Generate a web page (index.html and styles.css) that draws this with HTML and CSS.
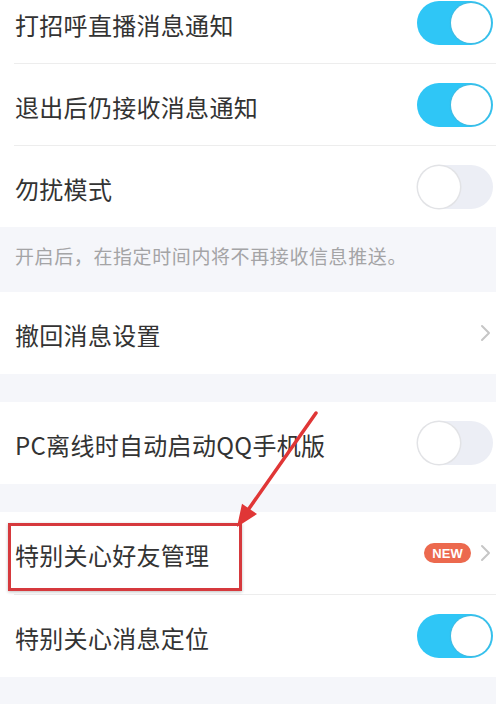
FILE: index.html
```html
<!DOCTYPE html>
<html lang="zh-CN">
<head>
<meta charset="utf-8">
<title>消息通知设置</title>
<link rel="stylesheet" href="styles.css">
</head>
<body>
<div class="page">
  <div class="group top">
    <div class="row">
      <span class="label">打招呼直播消息通知</span>
      <span class="switch on"><span class="knob"></span></span>
    </div>
    <div class="divider"></div>
    <div class="row">
      <span class="label">退出后仍接收消息通知</span>
      <span class="switch on"><span class="knob"></span></span>
    </div>
    <div class="divider"></div>
    <div class="row">
      <span class="label">勿扰模式</span>
      <span class="switch off"><span class="knob"></span></span>
    </div>
  </div>
  <div class="note">开启后，在指定时间内将不再接收信息推送。</div>
  <div class="group">
    <div class="row">
      <span class="label">撤回消息设置</span>
      <svg class="chev" width="12" height="18" viewBox="0 0 12 18"><polyline points="2,2 9,9 2,16" fill="none" stroke="#c6c6c6" stroke-width="2" stroke-linecap="round" stroke-linejoin="round"/></svg>
    </div>
  </div>
  <div class="gap"></div>
  <div class="group">
    <div class="row">
      <span class="label">PC离线时自动启动QQ手机版</span>
      <span class="switch off"><span class="knob"></span></span>
    </div>
  </div>
  <div class="gap"></div>
  <div class="group">
    <div class="row marked">
      <span class="label">特别关心好友管理</span>
      <span class="trail">
        <span class="badge">NEW</span>
        <svg class="chev" width="12" height="18" viewBox="0 0 12 18"><polyline points="2,2 9,9 2,16" fill="none" stroke="#c6c6c6" stroke-width="2" stroke-linecap="round" stroke-linejoin="round"/></svg>
      </span>
      <span class="highlight"></span>
    </div>
    <div class="divider"></div>
    <div class="row">
      <span class="label">特别关心消息定位</span>
      <span class="switch on"><span class="knob"></span></span>
    </div>
  </div>
  <svg class="arrow" width="496" height="704" viewBox="0 0 496 704">
    <line x1="316" y1="413" x2="248" y2="510" stroke="#e03636" stroke-width="3.5" stroke-linecap="round"/>
    <polygon points="237,527 242,503.8 257,514" fill="#e03636"/>
  </svg>
</div>
</body>
</html>
```

FILE: styles.css
```css
html, body {
  margin: 0;
  padding: 0;
  background: #f5f6fa;
}

.page {
  position: relative;
  width: 496px;
  height: 704px;
  overflow: hidden;
  font-family: "Noto Sans CJK SC", "Noto Sans", sans-serif;
  color: #333333;
}

.group {
  background: #ffffff;
}

.group.top {
  margin-top: -18px;
}

.row {
  position: relative;
  display: flex;
  align-items: center;
  justify-content: space-between;
  height: 82px;
  padding: 0 3px 0 15px;
  box-sizing: border-box;
}

.group.top .row {
  height: 81px;
}

.label {
  font-size: 24px;
  line-height: 1;
  padding-top: 4px;
  letter-spacing: 0.3px;
}

.divider {
  height: 1px;
  margin-left: 14px;
  background: #ededed;
}

.note {
  height: 65px;
  box-sizing: border-box;
  padding: 17px 0 0 15px;
  font-size: 19px;
  line-height: 24px;
  letter-spacing: 0.6px;
  color: #a4a4a6;
}

.gap {
  height: 28px;
}

.switch {
  position: relative;
  display: flex;
  align-items: center;
  width: 76px;
  height: 44px;
  border-radius: 22px;
  box-sizing: border-box;
  padding: 2px;
}

.switch.on {
  background: #2fc6f6;
  justify-content: flex-end;
}

.switch.off {
  background: #eceef5;
  justify-content: flex-start;
  padding: 1px;
}

.knob {
  display: block;
  width: 40px;
  height: 40px;
  border-radius: 50%;
  background: #ffffff;
  box-shadow: 0 0 1px 1px rgba(120, 150, 160, 0.25);
}

.switch.off .knob {
  width: 42px;
  height: 42px;
  box-shadow: 0 0 0 1.5px #e2e3e6;
}

.chev {
  display: block;
  margin-right: 1px;
}

.trail {
  display: flex;
  align-items: center;
}

.badge {
  display: flex;
  align-items: center;
  justify-content: center;
  width: 47px;
  height: 20px;
  border-radius: 10px;
  background: #ec694e;
  color: #ffffff;
  font-family: "Liberation Sans", Arial, sans-serif;
  font-size: 13px;
  font-weight: bold;
  margin-right: 9px;
}

.highlight {
  position: absolute;
  left: 8px;
  top: 11px;
  width: 234px;
  height: 68px;
  border: 3px solid #d6393d;
  box-sizing: border-box;
  box-shadow: 0 1px 3px rgba(0, 0, 0, 0.25);
}

.arrow {
  position: absolute;
  left: 0;
  top: 0;
  pointer-events: none;
}
```
